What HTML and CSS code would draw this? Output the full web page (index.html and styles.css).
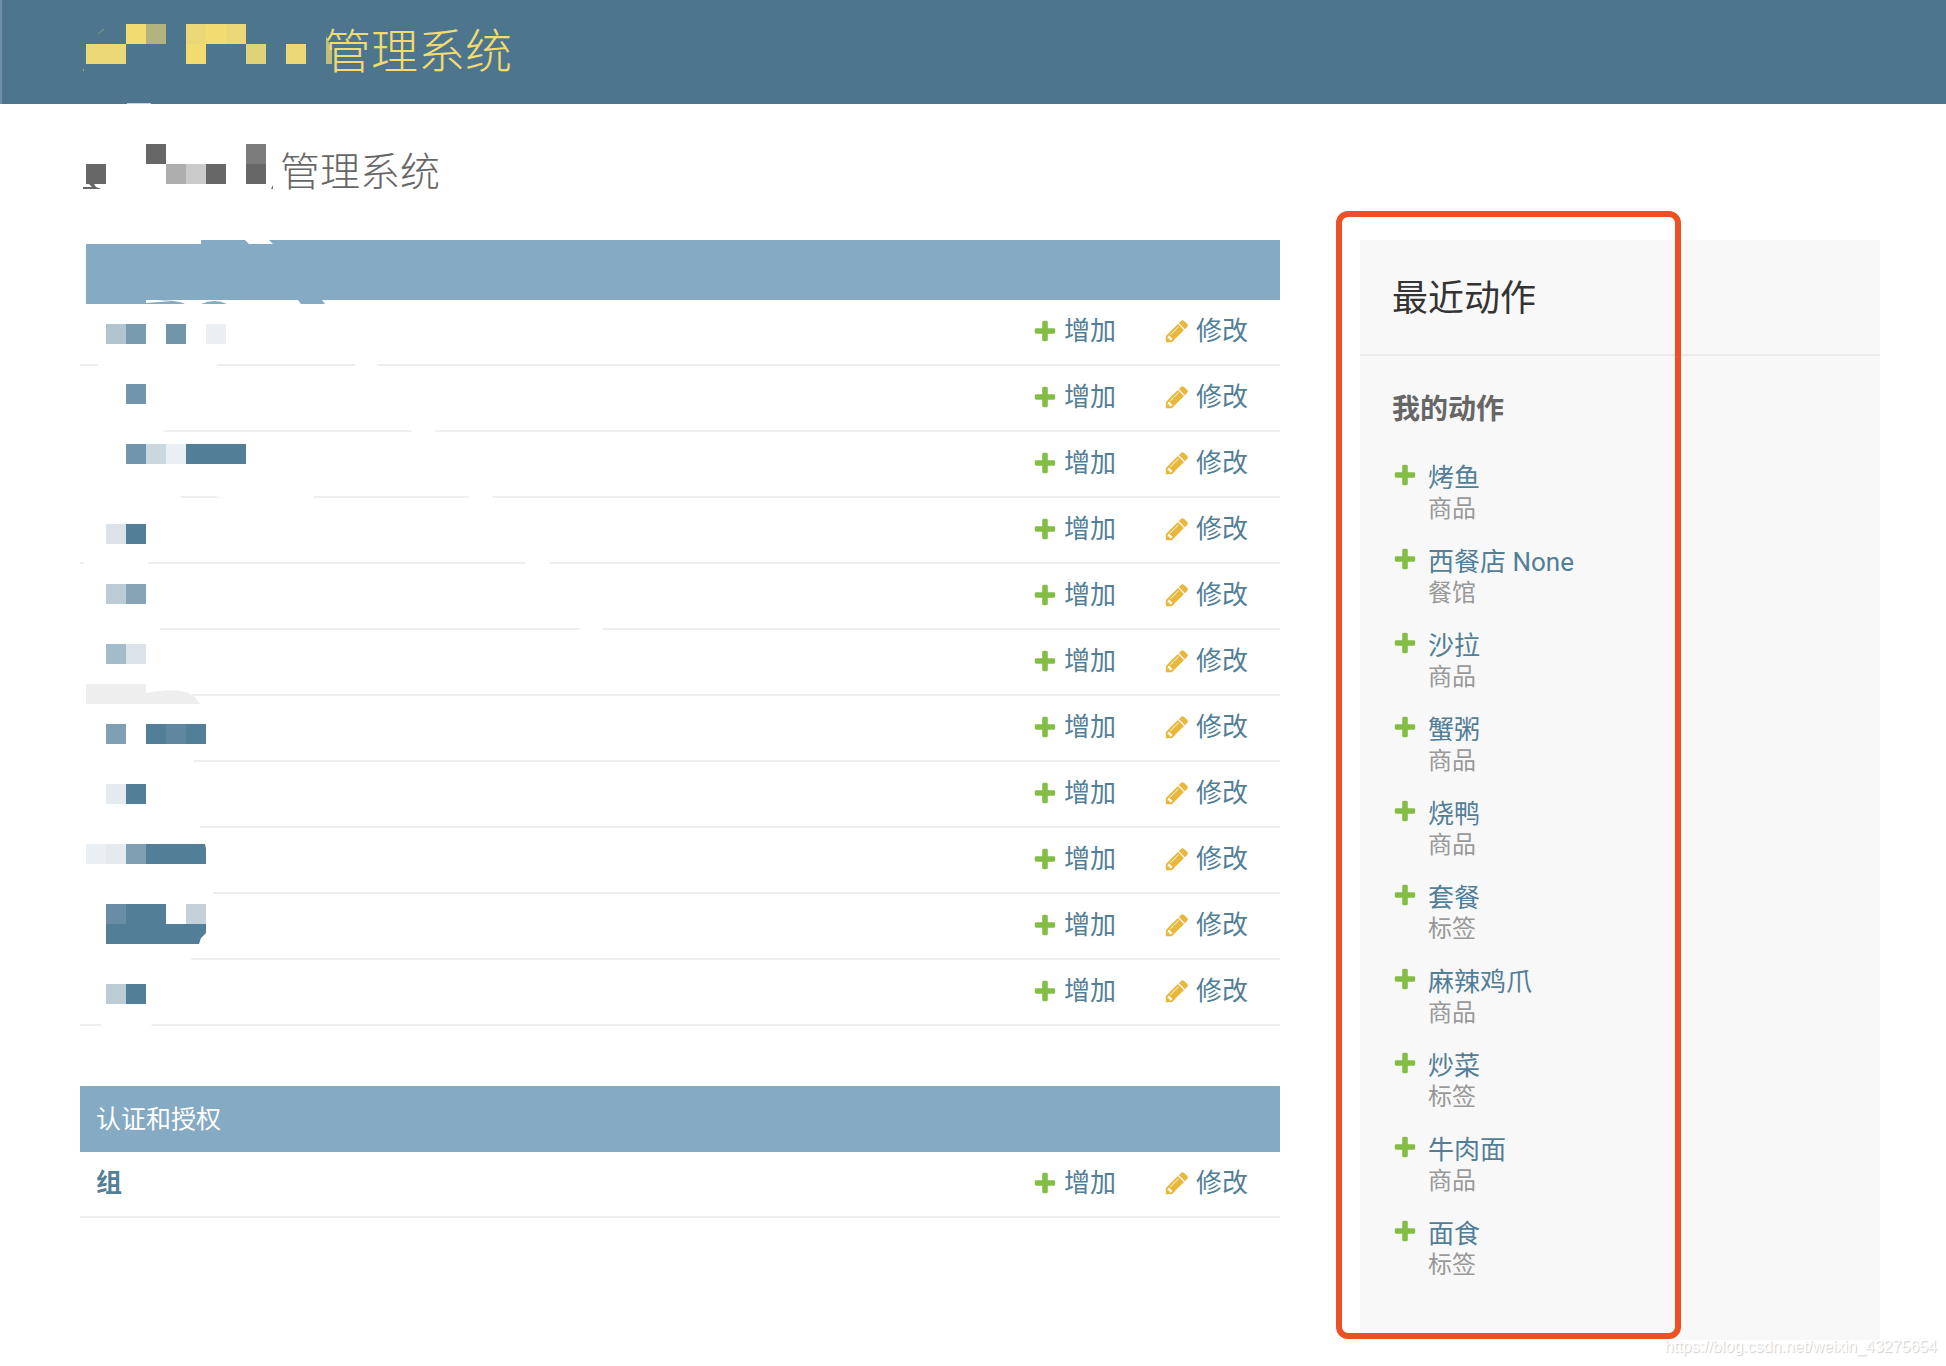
FILE: index.html
```html
<!DOCTYPE html>
<html lang="zh-CN">
<head>
<meta charset="utf-8">
<title>管理系统</title>
<link rel="stylesheet" href="styles.css">
</head>
<body>
<svg class="sprite" aria-hidden="true">
  <symbol id="plus" viewBox="0 0 1792 1792"><path fill="#83bd46" d="M1600 796v192q0 40-28 68t-68 28h-416v416q0 40-28 68t-68 28h-192q-40 0-68-28t-28-68v-416h-416q-40 0-68-28t-28-68v-192q0-40 28-68t68-28h416v-416q0-40 28-68t68-28h192q40 0 68 28t28 68v416h416q40 0 68 28t28 68z"/></symbol>
  <symbol id="pencil" viewBox="0 0 1792 1792"><path fill="#e8b73c" d="M491 1536l91-91-235-235-91 91v107h128v128h107zm523-928q0-22-22-22-10 0-17 7l-542 542q-7 7-7 17 0 22 22 22 10 0 17-7l542-542q7-7 7-17zm-54-192l416 416-832 832h-416v-416zm683 96q0 53-37 90l-166 166-416-416 166-165q36-38 90-38 53 0 91 38l235 234q37 39 37 91z"/></symbol>
</svg>

<header class="header">
  <svg class="brand-mask" viewBox="80 0 244 104" aria-hidden="true">
    <path fill="#ead775" d="M86 44h40v20H86zM186 24h20v20h-20zM226 24h20v20h-20zM286 44h20v20h-20z"/>
    <path fill="#f2db6f" d="M126 24h20v20h-20zM206 24h20v20h-20zM186 44h20v20h-20z"/>
    <path fill="#b3b47d" d="M146 24h20v20h-20z"/>
    <path fill="#e0d279" d="M246 44h20v20h-20z"/>
    <path fill="#c4be7b" d="M326 36l6 14v14h-6z"/>
    <path fill="none" stroke="#8a9b80" d="M98 34l6-5"/>
    <path fill="#b3a55a" d="M83 69h1v2h-1z"/>
    <path fill="#c5d3e6" d="M127 103h24v1h-24z"/>
  </svg>
  <a class="brand" href="#">管理系统</a>
</header>

<div class="page">
  <h1 class="title">
    <svg class="title-mask" viewBox="80 132 200 80" aria-hidden="true">
      <path fill="#676767" d="M86 164h20v20H86zM146 144h20v20h-20zM206 164h20v20h-20zM246 164h20v20h-20z"/>
      <path fill="#7c7c7c" d="M246 144h20v20h-20z"/>
      <path fill="#aeaeae" d="M166 164h20v20h-20z"/>
      <path fill="#cbcbcb" d="M186 164h20v20h-20z"/>
      <path fill="#676767" d="M83 187h9l-5-5 7 2 2 3 5 2H83zM272 187l1-2v4h-2z"/>
    </svg>
    <span>管理系统</span>
  </h1>

  <div class="columns">
    <main class="main">
      <section class="module">
        <table class="models models-first">
          <caption></caption>
          <tbody>
            <tr><th scope="row"></th><td><a class="action" href="#"><svg><use href="#plus"/></svg>增加</a></td><td><a class="action" href="#"><svg><use href="#pencil"/></svg>修改</a></td></tr>
            <tr><th scope="row"></th><td><a class="action" href="#"><svg><use href="#plus"/></svg>增加</a></td><td><a class="action" href="#"><svg><use href="#pencil"/></svg>修改</a></td></tr>
            <tr><th scope="row"></th><td><a class="action" href="#"><svg><use href="#plus"/></svg>增加</a></td><td><a class="action" href="#"><svg><use href="#pencil"/></svg>修改</a></td></tr>
            <tr><th scope="row"></th><td><a class="action" href="#"><svg><use href="#plus"/></svg>增加</a></td><td><a class="action" href="#"><svg><use href="#pencil"/></svg>修改</a></td></tr>
            <tr><th scope="row"></th><td><a class="action" href="#"><svg><use href="#plus"/></svg>增加</a></td><td><a class="action" href="#"><svg><use href="#pencil"/></svg>修改</a></td></tr>
            <tr><th scope="row"></th><td><a class="action" href="#"><svg><use href="#plus"/></svg>增加</a></td><td><a class="action" href="#"><svg><use href="#pencil"/></svg>修改</a></td></tr>
            <tr><th scope="row"></th><td><a class="action" href="#"><svg><use href="#plus"/></svg>增加</a></td><td><a class="action" href="#"><svg><use href="#pencil"/></svg>修改</a></td></tr>
            <tr><th scope="row"></th><td><a class="action" href="#"><svg><use href="#plus"/></svg>增加</a></td><td><a class="action" href="#"><svg><use href="#pencil"/></svg>修改</a></td></tr>
            <tr><th scope="row"></th><td><a class="action" href="#"><svg><use href="#plus"/></svg>增加</a></td><td><a class="action" href="#"><svg><use href="#pencil"/></svg>修改</a></td></tr>
            <tr><th scope="row"></th><td><a class="action" href="#"><svg><use href="#plus"/></svg>增加</a></td><td><a class="action" href="#"><svg><use href="#pencil"/></svg>修改</a></td></tr>
            <tr><th scope="row"></th><td><a class="action" href="#"><svg><use href="#plus"/></svg>增加</a></td><td><a class="action" href="#"><svg><use href="#pencil"/></svg>修改</a></td></tr>
          </tbody>
        </table>
        <!-- mosaic that hides the model names, and the wiped parts of the rules -->
        <svg class="models-mask" viewBox="80 240 640 790" aria-hidden="true">
          <path fill="#fff" d="M80 240h6v60h-6zM86 240h115v4H86zM245 240h24l4 4h-24z"/>
          <path fill="#84aac4" d="M86 300h60v4H86zM146 302q28-4 39 2h-39zM201 304q14-6 26 0zM298 300h24l3 4h-24z"/>
          <path fill="#fff" d="M146 301h26l-26 2z"/>
          <path fill="#fff" d="M98 363h121l-3 3H98zM353 363h22l4 4h-22zM80 429h80l8 4H80zM410 429h24l3 4h-24zM80 495h102l-3 4H80zM212 495h103l-3 4h-88zM467 495h24l3 4h-24zM84 561h64v4H84zM524 561h24l3 4h-24zM80 627h80v4H80zM578 627h23l3 4h-22zM80 693h112v4H80zM80 759h115l-3 4H80zM80 825h120v4H80zM80 891h133v4H80zM80 957h113l-3 4H80zM100 1023h53l-3 4h-48z"/>
          <path fill="#eee" d="M86 684h60v9q33-6 44 1 6 3 10 10H86z"/>
          <path fill="#527e97" d="M186 444h60v20h-60zM126 524h20v20h-20zM146 724h20v20h-20zM186 724h20v20h-20zM126 784h20v20h-20zM146 844h59l1 5v15h-60zM126 904h40v20h40v9l-5 5-2 6h-93v-20h20zM126 984h20v20h-20z"/>
          <path fill="#7196ab" d="M166 324h20v20h-20zM126 384h20v20h-20zM126 444h20v20h-20z"/>
          <path fill="#799bb0" d="M126 324h20v20h-20z"/>
          <path fill="#b1c4d0" d="M106 324h20v20h-20z"/>
          <path fill="#e9eff2" d="M206 324h20v20h-20zM166 444h20v20h-20zM86 844h20v20H86z"/>
          <path fill="#cad7df" d="M146 444h20v20h-20z"/>
          <path fill="#dbe3e9" d="M106 524h20v20h-20zM126 644h20v20h-20z"/>
          <path fill="#bbccd6" d="M106 584h20v20h-20zM106 984h20v20h-20z"/>
          <path fill="#87a4b6" d="M126 584h20v20h-20z"/>
          <path fill="#a4bbc9" d="M106 644h20v20h-20z"/>
          <path fill="#7f9fb3" d="M106 724h20v20h-20zM126 844h20v20h-20z"/>
          <path fill="#5f87a0" d="M166 724h20v20h-20z"/>
          <path fill="#e4eaed" d="M106 784h20v20h-20zM106 844h20v20h-20z"/>
          <path fill="#688da4" d="M106 904h20v20h-20z"/>
          <path fill="#c4d1db" d="M186 904h20v20h-20z"/>
        </svg>
      </section>

      <section class="module">
        <table class="models">
          <caption><a href="#">认证和授权</a></caption>
          <tbody>
            <tr><th scope="row"><a href="#">组</a></th><td><a class="action" href="#"><svg><use href="#plus"/></svg>增加</a></td><td><a class="action" href="#"><svg><use href="#pencil"/></svg>修改</a></td></tr>
          </tbody>
        </table>
      </section>
    </main>

    <aside class="recent">
      <h2>最近动作</h2>
      <h3>我的动作</h3>
      <ul>
        <li><svg><use href="#plus"/></svg><div><a href="#">烤鱼</a><span>商品</span></div></li>
        <li><svg><use href="#plus"/></svg><div><a href="#">西餐店 None</a><span>餐馆</span></div></li>
        <li><svg><use href="#plus"/></svg><div><a href="#">沙拉</a><span>商品</span></div></li>
        <li><svg><use href="#plus"/></svg><div><a href="#">蟹粥</a><span>商品</span></div></li>
        <li><svg><use href="#plus"/></svg><div><a href="#">烧鸭</a><span>商品</span></div></li>
        <li><svg><use href="#plus"/></svg><div><a href="#">套餐</a><span>标签</span></div></li>
        <li><svg><use href="#plus"/></svg><div><a href="#">麻辣鸡爪</a><span>商品</span></div></li>
        <li><svg><use href="#plus"/></svg><div><a href="#">炒菜</a><span>标签</span></div></li>
        <li><svg><use href="#plus"/></svg><div><a href="#">牛肉面</a><span>商品</span></div></li>
        <li><svg><use href="#plus"/></svg><div><a href="#">面食</a><span>标签</span></div></li>
      </ul>
      <div class="highlight"></div>
    </aside>
  </div>
  <div class="watermark">https://blog.csdn.net/weixin_43275654</div>
</div>
</body>
</html>
```

FILE: styles.css
```css
* {
  box-sizing: border-box;
}

body {
  margin: 0;
  background: #fff;
  color: #333;
  font-family: Roboto, "Noto Sans CJK SC", sans-serif;
  font-size: 26px;
  line-height: 32px;
}

a {
  color: #527e97;
  text-decoration: none;
}

.sprite {
  position: absolute;
  width: 0;
  height: 0;
}

.header {
  display: flex;
  align-items: center;
  height: 104px;
  padding-left: 78px;
  border-left: 2px solid #7191a7;
  background: #4e758e;
}

.brand-mask {
  flex: none;
  width: 244px;
  height: 104px;
  overflow: visible;
}

.brand {
  color: #f2db6f;
  font-size: 47px;
  font-weight: 300;
  line-height: 56px;
}

.page {
  position: relative;
  padding: 28px 66px 26px 80px;
}

.title {
  display: flex;
  align-items: center;
  height: 80px;
  margin: 0 0 28px;
  color: #666;
  font-size: 40px;
  font-weight: 300;
}

.title-mask {
  flex: none;
  width: 200px;
  height: 80px;
}

.title span {
  padding-top: 2px;
}

.columns {
  display: flex;
  align-items: flex-start;
  gap: 80px;
}

.main {
  flex: 1;
}

.module {
  position: relative;
  margin-bottom: 60px;
}

.models {
  width: 100%;
  border-collapse: separate;
  border-spacing: 0;
}

.models caption {
  height: 66px;
  padding: 18px 16px 16px;
  background: #84aac4;
  font-size: 25px;
  text-align: left;
}

.models-first caption {
  height: 60px;
}

.models caption a {
  color: #fff;
}

.models th,
.models td {
  height: 66px;
  padding: 0 16px 2px;
  border-bottom: 2px solid #eee;
  text-align: left;
}

.models td {
  width: 1px;
  padding-right: 32px;
}

.action {
  display: flex;
  align-items: center;
  gap: 6px;
  white-space: nowrap;
}

.action svg,
.recent svg {
  flex: none;
  width: 26px;
  height: 26px;
}

.models-mask {
  position: absolute;
  top: 0;
  left: 0;
  width: 640px;
  height: 790px;
  pointer-events: none;
}

.recent {
  position: relative;
  flex: none;
  width: 520px;
  padding-bottom: 60px;
  background: #f8f8f8;
}

.recent h2 {
  margin: 0;
  padding: 34px 32px 30px;
  border-bottom: 2px solid #eaeaea;
  font-size: 36px;
  font-weight: 400;
  line-height: 50px;
}

.recent h3 {
  margin: 0;
  padding: 38px 32px 32px;
  color: #666;
  font-size: 28px;
}

.recent ul {
  display: grid;
  gap: 22px;
  margin: 0;
  padding: 4px 32px 0;
  list-style: none;
}

.recent li {
  display: flex;
  gap: 10px;
}

.recent li a,
.recent li span {
  display: block;
}

.recent li span {
  color: #999;
  font-size: 24px;
  line-height: 30px;
}

.highlight {
  position: absolute;
  top: -29px;
  left: -24px;
  width: 345px;
  height: calc(100% + 28px);
  border: 6px solid #ee5025;
  border-radius: 12px;
}

.watermark {
  position: absolute;
  right: 9px;
  bottom: 4px;
  color: #fff;
  font-family: "Liberation Sans", Arial, sans-serif;
  font-size: 16px;
  line-height: 30px;
  text-shadow: 1px 1px 1px #ccc;
}
```
